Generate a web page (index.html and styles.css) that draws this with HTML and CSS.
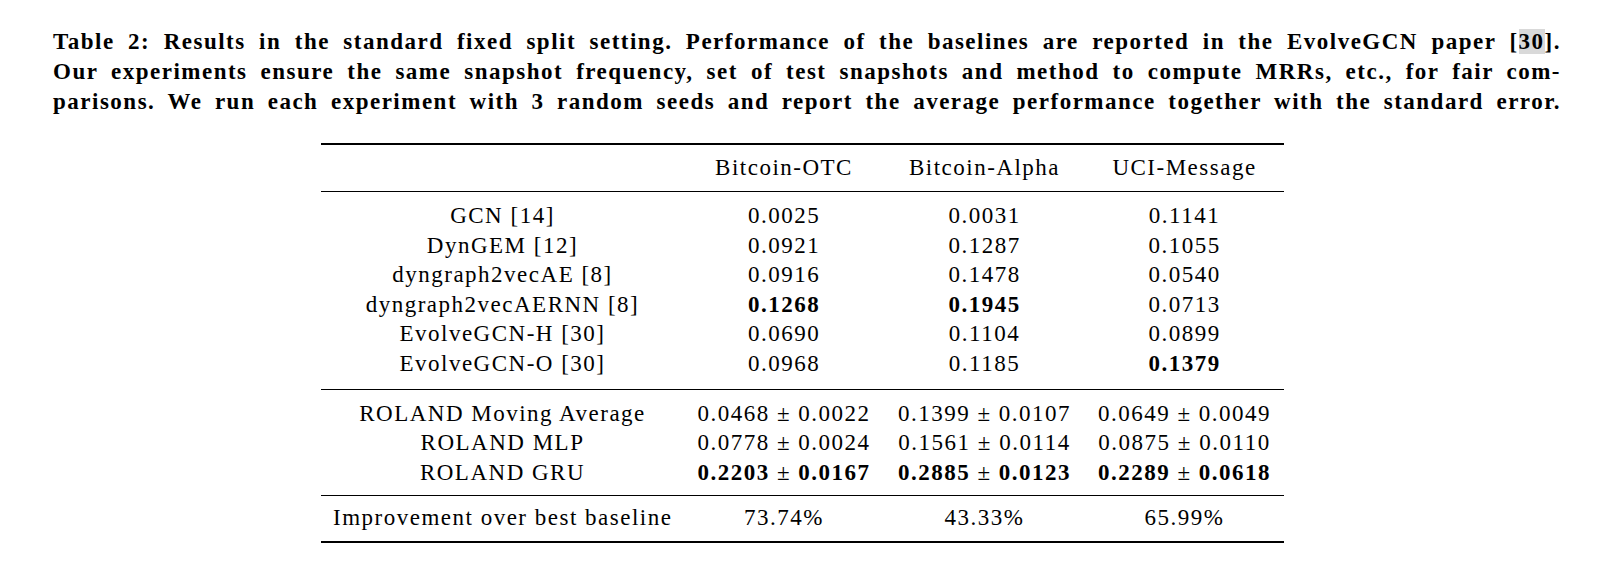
FILE: index.html
```html
<!DOCTYPE html>
<html>
<head>
<meta charset="utf-8">
<link rel="stylesheet" href="styles.css">
</head>
<body>
<div class="page">
  <div class="caption">
    <span class="cline">Table 2: Results in the standard fixed split setting. Performance of the baselines are reported in the EvolveGCN paper [<span class="ref">30</span>].</span>
    <span class="cline">Our experiments ensure the same snapshot frequency, set of test snapshots and method to compute MRRs, etc., for fair com-</span>
    <span class="cline">parisons. We run each experiment with 3 random seeds and report the average performance together with the standard error.</span>
  </div>
  <table class="results">
    <colgroup>
      <col class="c1"><col class="c2"><col class="c3"><col class="c4">
    </colgroup>
    <thead>
      <tr><th></th><th>Bitcoin-OTC</th><th>Bitcoin-Alpha</th><th>UCI-Message</th></tr>
    </thead>
    <tbody>
      <tr class="first"><td>GCN [14]</td><td>0.0025</td><td>0.0031</td><td>0.1141</td></tr>
      <tr><td>DynGEM [12]</td><td>0.0921</td><td>0.1287</td><td>0.1055</td></tr>
      <tr><td>dyngraph2vecAE [8]</td><td>0.0916</td><td>0.1478</td><td>0.0540</td></tr>
      <tr><td>dyngraph2vecAERNN [8]</td><td><b>0.1268</b></td><td><b>0.1945</b></td><td>0.0713</td></tr>
      <tr><td>EvolveGCN-H [30]</td><td>0.0690</td><td>0.1104</td><td>0.0899</td></tr>
      <tr class="last"><td>EvolveGCN-O [30]</td><td>0.0968</td><td>0.1185</td><td><b>0.1379</b></td></tr>
      <tr class="first sec"><td>ROLAND Moving Average</td><td>0.0468 ± 0.0022</td><td>0.1399 ± 0.0107</td><td>0.0649 ± 0.0049</td></tr>
      <tr><td>ROLAND MLP</td><td>0.0778 ± 0.0024</td><td>0.1561 ± 0.0114</td><td>0.0875 ± 0.0110</td></tr>
      <tr class="last2"><td>ROLAND GRU</td><td><b>0.2203</b> ± <b>0.0167</b></td><td><b>0.2885</b> ± <b>0.0123</b></td><td><b>0.2289</b> ± <b>0.0618</b></td></tr>
      <tr class="sec imp"><td>Improvement over best baseline</td><td>73.74%</td><td>43.33%</td><td>65.99%</td></tr>
    </tbody>
  </table>
</div>
</body>
</html>
```

FILE: styles.css
```css
html, body {
  margin: 0;
  padding: 0;
  background: #ffffff;
}
.page {
  font-family: "Liberation Serif", "Times New Roman", serif;
  color: #000;
}
.caption {
  margin-left: 53px;
  width: 1508px;
  padding-top: 27px;
  font-size: 23px;
  font-weight: bold;
  line-height: 30px;
  letter-spacing: 1.5px;
}
.cline {
  display: block;
  text-align: justify;
  text-align-last: justify;
}
.ref {
  background: #d9d9d9;
}
.results {
  margin-top: 26px;
  margin-left: 321px;
  border-collapse: separate;
  border-spacing: 0;
  table-layout: fixed;
  width: 963px;
  border-top: 2px solid #000;
  border-bottom: 2px solid #000;
  font-size: 23px;
  letter-spacing: 1.5px;
  line-height: 29.6px;
}
.c1 { width: 363px; }
.c2 { width: 200px; }
.c3 { width: 201px; }
.c4 { width: 199px; }
.results th {
  font-weight: normal;
  padding: 8px 12px;
  line-height: 30px;
  border-bottom: 1px solid #000;
  text-align: center;
}
.results td {
  padding: 0 12px;
  text-align: center;
  white-space: nowrap;
}
.results tr.first td { padding-top: 9px; }
.results tr.last td { padding-bottom: 10px; }
.results tr.last2 td { padding-bottom: 8px; }
.results tr.sec td { border-top: 1px solid #000; }
.results tr.imp td { padding-top: 7px; padding-bottom: 8px; }
```
